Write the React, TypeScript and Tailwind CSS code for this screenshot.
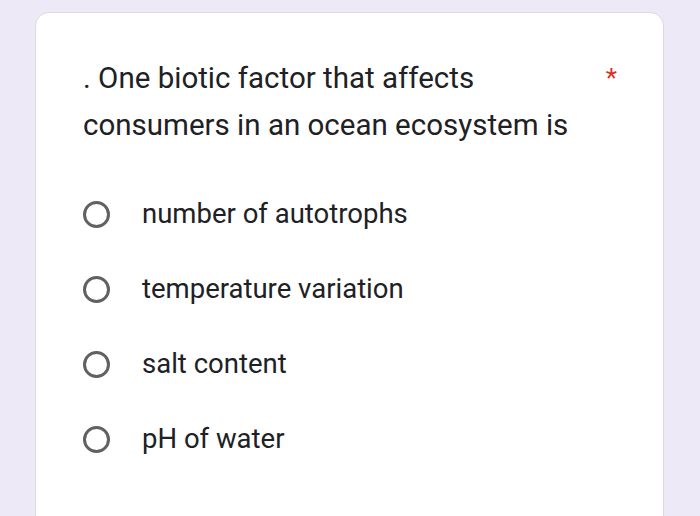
import React from 'react';

const options = ['number of autotrophs', 'temperature variation', 'salt content', 'pH of water'];

const Radio: React.FC = () => (
  <span className="block w-[27px] h-[27px] rounded-full border-[3px] border-[#616161] shrink-0" />
);

const App: React.FC = () => {
  return (
    <div
      className="w-[700px] h-[516px] bg-[#ede9f6] overflow-hidden pt-[12px] pl-[35px]"
      style={{ fontFamily: 'Roboto, "Noto Sans", sans-serif' }}
    >
      <div className="w-[629px] h-[530px] bg-white rounded-[14px] border border-[#dcd9e4] pl-[47px] pr-[46px] pt-[42px]">
        {/* Question title */}
        <div className="flex justify-between">
          <h2 className="text-[29.5px] leading-[47px] text-[#202124] font-normal">
            . One biotic factor that affects
            <br />
            consumers in an ocean ecosystem is
          </h2>
          <span className="text-[26px] leading-[46px] text-[#d93025]">*</span>
        </div>

        {/* Options */}
        <div className="mt-[51px] flex flex-col gap-[47px]">
          {options.map((opt) => (
            <label key={opt} className="flex items-center gap-[32px] h-[28px]">
              <Radio />
              <span className="text-[27.5px] text-[#202124]">{opt}</span>
            </label>
          ))}
        </div>
      </div>
    </div>
  );
};

export default App;
